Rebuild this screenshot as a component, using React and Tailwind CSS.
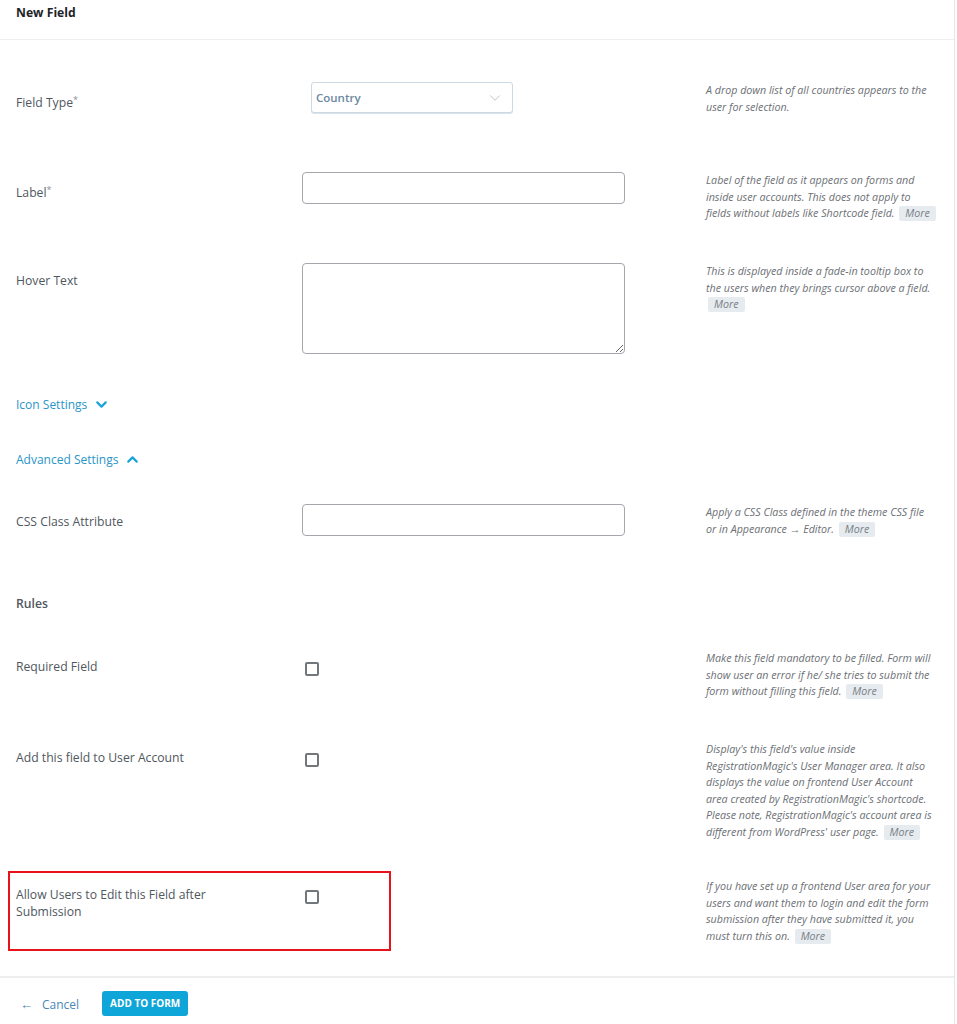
import { ChevronDown, ChevronUp } from 'lucide-react'

const font = { fontFamily: '"Open Sans", "Liberation Sans", sans-serif' }

/* small grey "More" chip at the end of a help text */
function More() {
  return (
    <span className="ml-[2px] inline-block rounded-[2px] bg-[#e6ebf0] px-[6px] leading-[15px] text-[#7a7f85]">More</span>
  )
}

function Help({ children }) {
  return (
    <p className="w-[230px] text-[10.7px] italic leading-[16.6px] text-[#6c7075]">
      {children} <More />
    </p>
  )
}

function Checkbox() {
  return <span className="mt-[12px] ml-[3px] block h-[14px] w-[14px] rounded-[2px] border-2 border-[#72777c] bg-white" />
}

function Row({ label, required, control, help, h, labelPt = 'pt-[12px]' }) {
  return (
    <div className={`grid grid-cols-[286px_323px_1fr] ${h}`}>
      <div className={`${labelPt} text-[12.2px] leading-[17px] text-[#50575e]`}>
        {label}
        {required && <sup className="text-[9px] text-[#8a8f94]">*</sup>}
      </div>
      <div>{control}</div>
      <div className="pl-[81px]">{help}</div>
    </div>
  )
}

export default function App() {
  const input = 'block h-[32px] w-full rounded-[4px] border border-[#a4a8ad] bg-white'

  return (
    <div className="min-h-[1024px] w-[955px] border-r border-[#e4e6e8] bg-white" style={font}>
      {/* Header */}
      <div className="h-[40px] border-b border-[#eceef0] px-4 pt-[4px]">
        <h1 className="text-[12.2px] font-bold leading-[17px] text-[#1d2327]">New Field</h1>
      </div>

      <div className="px-4 pt-[42px]">
        <Row
          h="h-[90px]"
          label="Field Type"
          required
          control={
            <div className="ml-[9px] flex h-[31px] w-[202px] items-center justify-between rounded-[3px] border border-[#ccd9e3] bg-white pl-[4px] pr-[8px] shadow-[0_1px_0_#dbe3ea]">
              <span className="text-[11.5px] font-semibold text-[#6b88a0]">Country</span>
              <ChevronDown size={18} strokeWidth={1.2} className="text-[#b4bec8]" />
            </div>
          }
          help={
            <p className="w-[230px] text-[10.7px] italic leading-[16.6px] text-[#6c7075]">
              A drop down list of all countries appears to the user for selection.
            </p>
          }
        />

        <Row
          h="h-[91px]"
          label="Label"
          required
          control={<input className={input} />}
          help={
            <Help>
              Label of the field as it appears on forms and inside user accounts. This does not apply to fields without
              labels like Shortcode field.
            </Help>
          }
        />

        <Row
          h="h-[133px]"
          labelPt="pt-[9px]"
          label="Hover Text"
          control={<textarea className="block h-[91px] w-full resize-y rounded-[4px] border border-[#a4a8ad] bg-white" />}
          help={<Help>This is displayed inside a fade-in tooltip box to the users when they brings cursor above a field.</Help>}
        />

        {/* collapsible sections */}
        <div className="flex h-[55px] items-start gap-[6px] text-[12px] leading-[17px] text-[#2a95c9]">
          Icon Settings
          <ChevronDown size={17} strokeWidth={3} className="text-[#1aa3d9]" />
        </div>
        <div className="flex h-[53px] items-start gap-[6px] text-[12px] leading-[17px] text-[#2a95c9]">
          Advanced Settings
          <ChevronUp size={17} strokeWidth={3} className="text-[#1aa3d9]" />
        </div>

        <Row
          h="h-[91px]"
          labelPt="pt-[9px]"
          label="CSS Class Attribute"
          control={<input className={input} />}
          help={<Help>Apply a CSS Class defined in the theme CSS file or in Appearance → Editor.</Help>}
        />

        <div className="h-[55px] text-[12.2px] font-semibold leading-[17px] text-[#50575e]">Rules</div>

        <Row
          h="h-[91px]"
          labelPt="pt-[8px]"
          label="Required Field"
          control={<Checkbox />}
          help={
            <Help>
              Make this field mandatory to be filled. Form will show user an error if he/ she tries to submit the form
              without filling this field.
            </Help>
          }
        />

        <Row
          h="h-[137px]"
          labelPt="pt-[8px]"
          label="Add this field to User Account"
          control={<Checkbox />}
          help={
            <Help>
              Display's this field's value inside RegistrationMagic's User Manager area. It also displays the value on
              frontend User Account area created by RegistrationMagic's shortcode. Please note, RegistrationMagic's
              account area is different from WordPress' user page.
            </Help>
          }
        />

        <div className="relative">
          {/* highlight drawn around the option */}
          <div className="pointer-events-none absolute left-[-8px] top-[-7px] h-[80px] w-[383px] border-2 border-[#e8121b]" />
          <Row
            h="h-[98px]"
            labelPt="pt-[8px]"
            label={<span className="block w-[200px]">Allow Users to Edit this Field after Submission</span>}
            control={<Checkbox />}
            help={
              <Help>
                If you have set up a frontend User area for your users and want them to login and edit the form
                submission after they have submitted it, you must turn this on.
              </Help>
            }
          />
        </div>
      </div>

      {/* Footer */}
      <div className="flex items-center gap-[23px] border-t-2 border-[#eceef0] px-[20px] pt-[13px]">
        <span className="flex items-center gap-[9px] pt-[2px] text-[12px] text-[#4a86b8]">
          <span className="text-[13px]">←</span>
          Cancel
        </span>
        <button className="h-[25px] rounded-[3px] bg-[#0ea5d8] px-[8px] text-[10px] font-bold text-white">
          ADD TO FORM
        </button>
      </div>
    </div>
  )
}
